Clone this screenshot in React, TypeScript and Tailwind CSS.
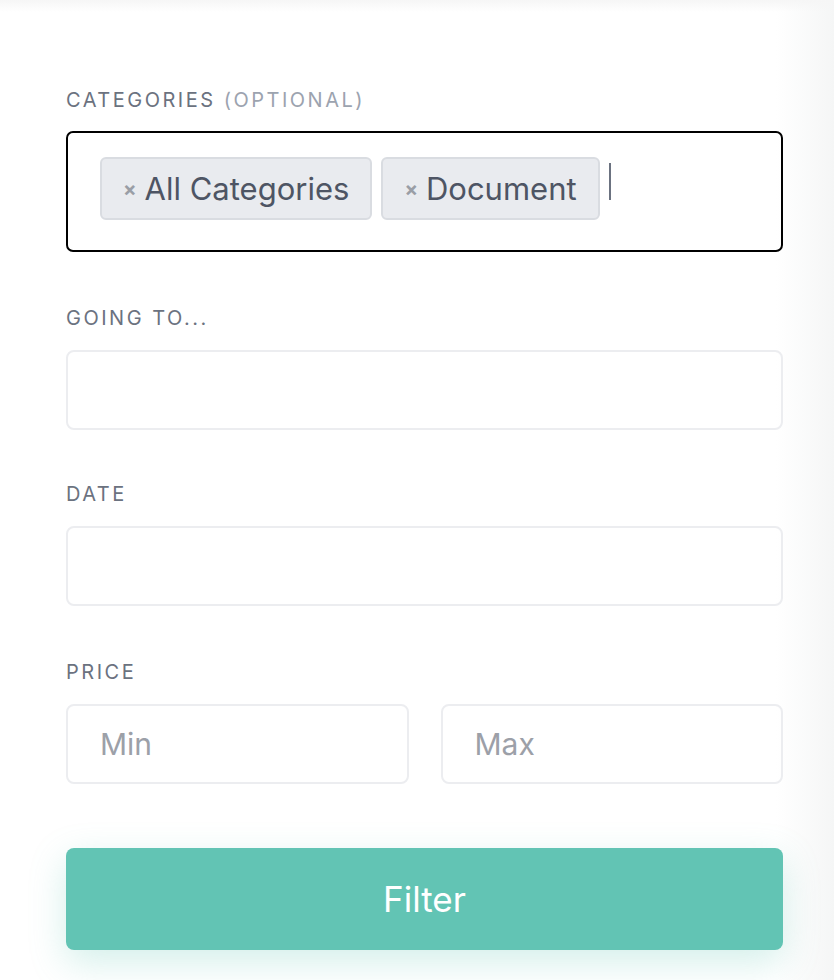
import React from "react";

function Chip({ label }: { label: string }) {
  return (
    <div className="flex items-center h-[63px] pl-[21px] pr-[21px] gap-[8px] rounded-[6px] bg-[#e9ebef] border-2 border-[#d9dce1]">
      <span className="text-[20px] text-[#9a9ea6] leading-none font-bold">×</span>
      <span className="text-[31px] text-[#4e5564] leading-none">{label}</span>
    </div>
  );
}

function Label({ children }: { children: React.ReactNode }) {
  return (
    <div className="text-[20px] tracking-[0.125em] text-[#6b7280] uppercase leading-none">{children}</div>
  );
}

export default function App() {
  return (
    <div
      className="w-[834px] h-[980px] bg-[linear-gradient(to_right,#ffffff_93%,#f5f6f6)] flex flex-col overflow-hidden"
      style={{ fontFamily: "Inter, 'Noto Sans', sans-serif" }}
    >
      <div className="h-[12px] bg-gradient-to-b from-[#f6f6f6] to-transparent shrink-0" />
      <div className="flex flex-1">
        <div className="w-[790px] pl-[66px] pr-[7px] pt-[78px] flex flex-col">
          <Label>
            Categories <span className="text-[#9ca3af]">(optional)</span>
          </Label>
          <div className="mt-[21px] h-[121px] rounded-[7px] border-2 border-black pl-[32px] pt-[24px] flex items-start gap-[9px]">
            <Chip label="All Categories" />
            <Chip label="Document" />
            <div className="w-[2px] h-[37px] bg-[#6b7280] mt-[6px] ml-[0px]" />
          </div>

          <div className="mt-[56px]">
            <Label>Going to...</Label>
          </div>
          <div className="mt-[22px] h-[80px] rounded-[8px] border-2 border-[#ecedf0]" />

          <div className="mt-[54px]">
            <Label>Date</Label>
          </div>
          <div className="mt-[22px] h-[80px] rounded-[8px] border-2 border-[#ecedf0]" />

          <div className="mt-[56px]">
            <Label>Price</Label>
          </div>
          <div className="mt-[22px] grid grid-cols-2 gap-[32px]">
            <div className="h-[80px] rounded-[8px] border-2 border-[#ecedf0] flex items-center pl-[32px] text-[30px] text-[#9ca0a8]">
              Min
            </div>
            <div className="h-[80px] rounded-[8px] border-2 border-[#ecedf0] flex items-center pl-[32px] text-[30px] text-[#9ca0a8]">
              Max
            </div>
          </div>

          <button className="mt-[64px] h-[102px] rounded-[8px] bg-[#62c4b4] text-white text-[35px] flex items-center justify-center shadow-[0_12px_36px_rgba(98,196,180,0.28)]">
            Filter
          </button>
        </div>
      </div>
    </div>
  );
}
